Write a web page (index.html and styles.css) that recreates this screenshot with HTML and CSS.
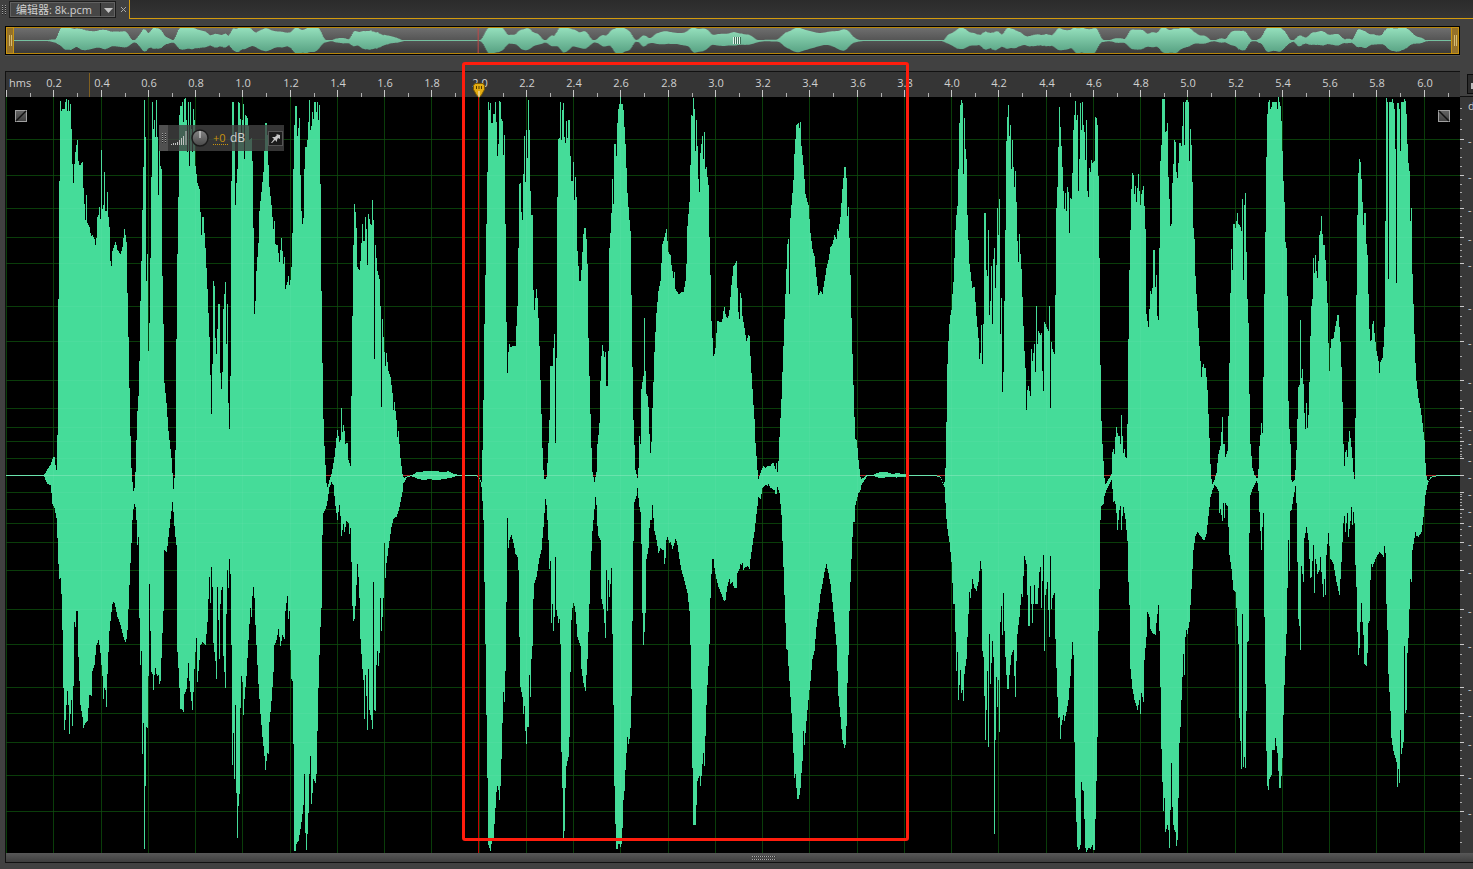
FILE: index.html
```html
<!DOCTYPE html>
<html lang="zh">
<head>
    <meta charset="UTF-8">
    <meta name="viewport" content="width=device-width, initial-scale=1.0">
    <title>编辑器: 8k.pcm</title>
    <link rel="stylesheet" href="styles.css">
</head>
<body>
    <!-- Panel tabs -->
    <div class="tab-bar">
        <div class="tab-area">
            <span class="grip"></span>
            <button class="tab">
                <span class="tab-title">编辑器: 8k.pcm</span>
                <svg class="tab-arrow" width="16" height="14"><path d="M1.500 0V13" stroke="#1c1c1c"/><path d="M5 5h9l-4.500 5z" fill="#c4c4c4"/></svg>
            </button>
            <button class="tab-close" aria-label="Close">
                <svg width="7" height="7"><path d="M1 1l5 5M6 1L1 6" stroke="#a9a9a9" fill="none"/></svg>
            </button>
        </div>
        <div class="tab-rest"></div>
    </div>

    <div class="editor">
        <!-- Zoom navigator -->
        <div class="overview">
            <svg id="overviewWave" viewBox="0 0 1454 25" preserveAspectRatio="none">
                <defs>
                    <linearGradient id="overviewFill" x1="0" y1="0" x2="0" y2="25" gradientUnits="userSpaceOnUse">
                        <stop offset="0" stop-color="#94dfbc"/>
                        <stop offset="1" stop-color="#58a283"/>
                    </linearGradient>
                </defs>
            </svg>
            <button class="zoom-handle zoom-left" aria-label="Zoom start"></button>
            <span class="overview-grip"></span>
            <button class="zoom-handle zoom-right" aria-label="Zoom end"></button>
        </div>

        <!-- Time ruler -->
        <svg class="ruler" id="ruler"></svg>
        <div class="scale-head">
            <button class="scale-btn" aria-label="Scale"></button>
        </div>

        <!-- Waveform -->
        <div class="plot">
            <svg class="layer" id="grid"></svg>
            <svg class="layer" id="wave" viewBox="0 0 1454 756" preserveAspectRatio="none"></svg>
            <svg class="layer" id="gridOver"></svg>

            <button class="fade fade-in" aria-label="Fade in">
                <svg width="12" height="12"><path d="M1 11L11 1" stroke="#111" stroke-width="1.500"/></svg>
            </button>
            <button class="fade fade-out" aria-label="Fade out">
                <svg width="12" height="12"><path d="M1 1L11 11" stroke="#111" stroke-width="1.500"/></svg>
            </button>

            <div class="hud">
                <span class="hud-grip"><span class="grip"></span></span>
                <svg class="hud-bars" width="16" height="14">
                    <path d="M.5 14v-1M2.500 14v-2M4.500 14v-2M6.500 14v-3M8.500 14v-5M10.500 14v-7M12.500 14v-9M15 14V0" stroke="#c2c2c2"/>
                </svg>
                <svg class="hud-knob" width="18" height="18">
                    <defs>
                        <linearGradient id="knobFill" x1="0" y1="0" x2="0" y2="1">
                            <stop offset="0" stop-color="#858585"/>
                            <stop offset="1" stop-color="#484848"/>
                        </linearGradient>
                    </defs>
                    <circle cx="9" cy="9" r="8" fill="url(#knobFill)" stroke="#1b1b1b" stroke-width="1.500"/>
                    <path d="M9 2v7" stroke="#eee"/>
                </svg>
                <input class="hud-value" type="text" id="gain" value="+0">
                <label class="hud-unit" for="gain">dB</label>
                <button class="hud-pin" aria-label="Pin">
                    <svg width="11" height="11"><path d="M6 1l4 1 0 4-2-1-1 2 0 2-2-2-3 3-1 0 3-4-2-2 3 0 2-2z" fill="#c6c6c6"/></svg>
                </button>
            </div>
        </div>
        <svg class="scale" id="scale"></svg>

        <!-- Scroll bar -->
        <div class="scroller"><span class="scroller-grip"></span></div>

        <!-- Play position -->
        <span class="playhead"></span>
        <svg class="playhead-cap" width="12" height="15">
            <path d="M2 .5h8l1.500 2v4L8.500 12 6 14.500 3.500 12 .5 6.500v-4z" fill="#e3ac13" stroke="#7c5b00"/>
            <path d="M3.500 3v3M6 3v3M8.500 3v3" stroke="#4d3900"/>
            <path d="M6 8v6" stroke="#eee"/>
        </svg>

        <div class="highlight"></div>
    </div>

    <script src="script.js"></script>
</body>
</html>
```
FILE: styles.css
```css
* {
    box-sizing: border-box;
}

body {
    margin: 0;
    height: 100vh;
    display: flex;
    flex-direction: column;
    overflow: hidden;
    background-color: #414141;
    color: #d0d0d0;
    font-family: "Open Sans", "Noto Sans CJK SC", sans-serif;
    font-size: 11px;
    line-height: 14px;
}

button {
    margin: 0;
    padding: 0;
    border: none;
    background: none;
    color: inherit;
    font: inherit;
}

svg {
    display: block;
}

/* Tabs */
.tab-bar {
    display: flex;
    height: 19px;
}

.tab-area {
    display: flex;
    align-items: center;
    width: 129px;
    padding-left: 2px;
}

.grip {
    width: 4px;
    height: 10px;
    background: repeating-linear-gradient(#a0a0a0 0 1px, #222 1px 2px);
    -webkit-mask: linear-gradient(90deg, #000 1px, transparent 1px 3px, #000 3px);
    mask: linear-gradient(90deg, #000 1px, transparent 1px 3px, #000 3px);
}

.tab {
    display: flex;
    align-items: center;
    justify-content: space-between;
    width: 107px;
    height: 17px;
    margin-left: 3px;
    padding-left: 6px;
    border: 1px solid #1c1c1c;
    box-shadow: inset 0 0 0 1px #626262;
    background-color: #464646;
}

.tab-title {
    white-space: nowrap;
}

.tab-close {
    margin-left: 4px;
}

.tab-rest {
    flex: 1;
    border-left: 1px solid #d39b0e;
    border-bottom: 1px solid #d39b0e;
    background: linear-gradient(#2b2b2b, #353535);
}

/* Editor */
.editor {
    position: relative;
    flex: 1;
    display: grid;
    grid-template-columns: 1fr 13px;
    grid-template-rows: 29px 26px 1fr 10px;
    margin-left: 5px;
    padding: 7px 0 6px;
}

.overview {
    position: relative;
    margin-bottom: 0;
    padding-left: 0;
    border: 1px solid #000;
    background: linear-gradient(#707070, #383838);
    box-shadow: inset 0 1px #b8860b, inset 0 -1px #b8860b, 0 1px #555;
}

.overview svg {
    width: 100%;
    height: 25px;
    margin-top: 1px;
}

.zoom-handle {
    position: absolute;
    top: 0;
    width: 8px;
    height: 27px;
    border: 1px solid #c8930f;
    background: linear-gradient(90deg, transparent 2px, #d7bd74 2px 3px, transparent 3px 4px, #d7bd74 4px 5px, transparent 5px) center 7px / 100% 11px no-repeat, #94712a;
}

.zoom-left {
    left: 0;
}

.zoom-right {
    right: 0;
}

.overview-grip {
    position: absolute;
    left: 50%;
    top: 10px;
    width: 8px;
    height: 7px;
    background: repeating-linear-gradient(90deg, #e4f4ec 0 1px, #3e7059 1px 2px);
}

.ruler {
    grid-row: 2;
    width: 100%;
    height: 26px;
    border-top: 1px solid #111;
    border-left: 1px solid #111;
    background-color: #353535;
}

.ruler text,
.scale text {
    fill: #d0d0d0;
}

.scale-head {
    grid-row: 2;
    grid-column: 2;
    padding: 3px 0 3px 7px;
    border-bottom: 1px solid #111;
}

.scale-btn {
    display: block;
    width: 6px;
    height: 20px;
    border: 1px solid #0c0c0c;
    border-right: none;
    background: linear-gradient(#bbb, #bbb) 3px 8px / 2px 6px no-repeat, #2c2c2c;
}

.plot {
    position: relative;
    grid-row: 3;
    border-left: 1px solid #111;
    background-color: #000;
}

.layer {
    position: absolute;
    inset: 0;
    width: 100%;
    height: 100%;
}

.scale {
    grid-row: 3;
    grid-column: 2;
    width: 13px;
    height: 100%;
    background-color: #383838;
}

.fade {
    position: absolute;
    top: 13px;
    width: 12px;
    height: 12px;
    background: linear-gradient(#666, #3c3c3c);
    box-shadow: inset 0 0 0 1px #a0a0a0;
}

.fade-in {
    left: 9px;
}

.fade-out {
    right: 10px;
}

/* Gain popup */
.hud {
    position: absolute;
    left: 153px;
    top: 28px;
    display: flex;
    align-items: center;
    width: 125px;
    height: 26px;
    background-color: rgba(66, 66, 66, 0.8);
}

.hud-grip {
    display: flex;
    align-items: center;
    width: 9px;
    height: 26px;
    padding-left: 3px;
    background-color: rgba(88, 88, 88, 0.8);
}

.hud-bars {
    margin-left: 3px;
}

.hud-knob {
    margin: 0 4px;
}

.hud-value {
    width: 15px;
    height: 13px;
    padding: 0;
    border: none;
    border-bottom: 1px dotted #c8930f;
    background: none;
    color: #c8930f;
    font: inherit;
}

.hud-unit {
    margin-left: 2px;
    font-size: 12px;
}

.hud-pin {
    display: grid;
    place-items: center;
    width: 13px;
    height: 13px;
    margin-left: auto;
    margin-right: 2px;
    background-color: #1b1b1b;
    box-shadow: 0 0 0 1px #555;
}

/* Scroll bar */
.scroller {
    grid-row: 4;
    grid-column: 1 / 3;
    display: flex;
    justify-content: center;
    padding-top: 3px;
    padding-left: 49px;
    border-bottom: 1px solid #111;
    border-left: 1px solid #111;
    background: linear-gradient(#585858, #3e3e3e);
}

.scroller-grip {
    width: 24px;
    height: 4px;
    background: repeating-linear-gradient(90deg, #aaa 0 1px, #333 1px 2px);
    -webkit-mask: linear-gradient(#000 1px, transparent 1px 3px, #000 3px);
    mask: linear-gradient(#000 1px, transparent 1px 3px, #000 3px);
}

/* Overlays */
.playhead {
    position: absolute;
    left: 473px;
    top: 78px;
    bottom: 16px;
    width: 1px;
    background-color: #c80000;
}

.playhead-cap {
    position: absolute;
    left: 468px;
    top: 64px;
}

.highlight {
    position: absolute;
    left: 457px;
    top: 43px;
    width: 447px;
    bottom: 28px;
    border: 3px solid #ff1d0d;
    border-radius: 3px;
    pointer-events: none;
}

/* space between the navigator and the ruler */
.editor {
    grid-template-rows: 29px 42px 1fr 10px;
}

.ruler,
.scale-head {
    align-self: end;
    height: 26px;
}
```
FILE: script.js
```js
const NS = 'http://www.w3.org/2000/svg';
const WIDTH = 1454;
const HEIGHT = 756;
const STEP = 47.25;   // width of 0.2 s

// Peaks as x,y pairs: 3 units per pixel across, 2.0128 per pixel down
const peaks = [
    {
        from: 0,
        top: '18,775 132,775 140,765 150,756 159,738 163,738 166,755 170,768 172,695 175,420 178,183 181,22 184,42 188,38 193,38 196,25 199,18 202,42 205,20 208,42 211,28 214,78 217,148 220,188 223,148 227,118 232,100 235,142 239,154 245,145 247,145 250,197 256,262 259,212 262,268 269,276 272,295 277,292 283,300 287,316 290,290 293,237 296,260 299,222 301,260 304,120 307,240 310,232 313,165 316,243 319,243 322,205 325,255 328,275 331,345 334,354 337,325 343,311 347,304 352,322 361,331 367,317 373,280 379,305 382,408 385,497 388,600 391,697 394,760 397,790 401,813 405,790 408,728 411,657 417,595 420,448 423,378 427,242 430,155 433,20 436,95 439,384 442,330 445,525 448,468 451,338 454,175 457,24 460,78 463,60 466,95 469,20 472,95 475,211 478,110 481,153 484,160 487,375 490,472 493,590 499,630 505,687 514,740 520,803 523,780 526,724 529,501 532,331 535,215 538,50 541,32 544,32 547,25 550,65 553,18 556,16 559,60 562,125 565,24 568,153 571,24 574,78 577,125 580,38 583,60 586,152 592,187 598,200 604,292 607,256 610,256 616,318 622,400 628,497 634,652 637,552 640,384 643,395 646,500 649,532 655,430 658,430 661,570 664,602 667,567 670,440 673,410 676,386 679,512 682,430 685,630 688,682 691,575 694,183 697,24 700,24 703,100 706,231 709,187 712,160 715,24 720,28 723,120 727,60',
        bottom: '18,776 132,777 141,793 152,795 157,833 163,842 170,865 175,955 179,995 182,975 186,1052 189,1157 192,1294 195,1278 198,1248 202,1209 205,1237 208,1296 211,1255 214,1228 217,1281 220,1200 223,1070 226,1080 229,1048 232,1048 235,1142 241,1237 247,1263 250,1284 256,1274 262,1270 268,1217 274,1220 277,1170 283,1157 289,1118 295,1107 300,1125 307,1180 311,1240 314,1185 319,1241 322,1175 328,1089 334,1050 338,1029 343,1032 352,1060 361,1077 370,1102 376,1112 381,1100 385,1045 390,965 394,912 398,850 404,830 408,850 412,915 415,900 418,1062 421,1157 424,1130 427,1337 430,1274 433,1527 436,1401 439,1283 442,1284 445,1180 448,995 451,1088 454,1172 457,1175 460,1208 463,1178 466,1163 470,1180 476,1176 479,1204 482,1183 485,1124 490,1048 493,925 500,930 505,900 511,863 517,830 520,850 525,895 530,922 532,1132 537,1183 540,1245 544,1245 550,1251 553,1215 560,1205 565,1153 568,1190 571,1212 577,1247 580,1212 584,1150 589,1104 592,1192 598,1148 601,1118 607,1112 616,1118 622,1070 628,980 631,1032 634,961 637,1000 640,1113 646,1150 649,1186 652,1000 655,1066 658,1145 661,1035 664,1007 667,1000 670,1140 676,1203 679,1055 682,967 685,1003 688,945 691,975 694,1118 697,1358 700,1294 703,1386 706,1237 709,1414 712,1505 716,1420 719,1415 722,1157 726,1200'
    },
    {
        from: 690,
        top: '40,28 43,138 46,50 52,56 55,72 58,100 65,97 68,165 70,278 73,450 76,425 79,365 85,308 88,243 94,205 100,165 103,122 106,66 109,66 112,90 117,190 124,232 130,280 133,263 136,310 142,312 148,346 154,297 160,350 163,337 166,400 172,387 175,374 178,392 183,376 186,318 188,257 191,110 195,32 199,32 202,92 205,76 208,56 211,172 214,243 217,269 220,257 223,160 226,115 231,113 234,78 238,20 241,80 244,72 247,45 250,58 253,25 256,24 259,45 262,25 265,60 268,30 271,190 274,405 277,550 280,662 284,735 287,765 290,803 296,790 303,775 308,760 314,735 319,700 322,684 328,708 331,704 334,641 337,688 341,669 346,712 352,711 355,745 361,757 364,615 367,455 370,312 373,230 376,245 379,278 382,357 388,362 391,345 397,269 400,303 403,303 406,255 409,280 412,353 415,250 421,270 424,271 427,222 430,262 433,541 436,312 442,365 448,380 451,435 454,638 457,460 460,498 466,556 469,530 475,565 481,577 487,610 490,644 493,628 499,665 502,698 505,686 511,740 517,773 521,782 530,778 538,776 552,773 562,768 572,769 590,766 605,767 620,766 635,770 655,767 670,772 685,775 719,775',
        bottom: '38,1185 40,1258 44,1215 49,1180 55,1108 61,1042 64,1060 67,1018 70,1000 73,1022 76,1077 80,1130 84,1185 91,1255 97,1302 103,1340 106,1368 112,1335 115,1337 118,1272 124,1230 130,1172 133,1118 139,1108 145,1084 151,1120 157,1097 163,1105 166,1048 172,1018 175,1065 178,1048 181,1127 184,1185 188,1190 190,1316 193,1531 198,1531 200,1505 203,1518 208,1500 214,1473 220,1440 223,1376 226,1495 229,1529 232,1497 235,1455 238,1376 241,1341 244,1438 247,1415 250,1386 256,1395 260,1370 262,1290 265,1203 268,1137 271,1080 274,1042 277,895 280,852 287,843 292,828 298,800 304,790 310,795 315,833 322,865 328,835 331,857 334,898 340,873 343,890 349,868 355,872 359,902 362,872 366,1028 370,1068 374,1065 379,997 382,955 385,980 388,1022 391,1105 397,1165 400,1188 403,1266 406,1178 409,1220 412,1289 415,1165 418,1247 424,1268 427,1286 430,991 433,1248 437,1250 440,1110 445,1160 448,1133 451,1022 454,1088 457,1060 460,1022 463,912 466,982 469,952 475,922 484,880 490,863 500,858 508,840 517,810 521,785 523,789 530,779 540,777 555,780 565,783 580,785 600,783 620,786 640,783 660,781 675,778 690,776 719,776'
    },
    {
        from: 1410,
        top: '0,775 21,776 27,780 35,790 37,724 40,624 43,470 46,373 49,270 52,165 55,25 58,40 61,26 64,66 67,66 70,48 73,48 76,24 79,65 82,132 85,108 88,22 91,24 94,58 97,62 100,130 103,90 106,270 109,467 112,570 115,527 118,512 121,518 127,515 136,515 142,435 145,318 148,190 151,188 154,245 157,262 160,170 163,92 166,185 169,80 172,137 175,20 178,80 181,203 184,252 187,252 190,403 193,443 196,418 199,400 202,418 205,458 208,515 214,652 217,720 220,765 223,783 227,783 230,778 235,710 238,665 241,556 247,556 250,520 253,492 256,710 259,540 262,215 265,98 268,97 271,25 274,100 277,40 280,26 283,95 286,106 289,62 292,97 295,60 298,60 301,133 304,184 307,184 310,145 313,222 316,175 319,216 322,325 328,385 331,385 334,362 337,327 340,290 343,278 346,278 349,300 352,350 355,500 361,652 364,720 367,768 373,790 380,765 383,687 386,697 389,658 392,550 397,513 403,537 406,528 409,595 413,595 415,525 418,318 421,288 424,247 427,180 430,230 433,108 436,108 439,133 442,66 445,38 448,28 451,15 454,28 459,28 463,75 466,108 472,207 478,262 481,283 484,412 487,558 490,664 496,765 502,780 505,760 508,696 511,712 514,601 520,575 523,459 526,565 529,612 534,617 537,680 541,730 544,708 547,640 550,588 553,527 559,448 565,405 571,385 577,310 583,296 589,280 595,327 601,333 604,352 610,378 613,367 616,400 625,411 634,407 640,407 646,385 649,350 652,273 658,225 661,150 664,50 667,52 670,16 673,38 676,122 679,60 682,112 685,180 688,205 691,127 697,92 700,138 703,85 706,160 709,155 712,176 715,192 718,295 721,373 724,464 730,535 735,530 738,497 742,464 749,467',
        bottom: '0,776 22,778 30,785 35,802 40,865 43,990 46,1115 49,1258 52,1385 55,1520 61,1532 66,1508 70,1512 73,1478 76,1445 80,1401 84,1401 88,1430 91,1400 94,1347 97,1275 100,1212 103,1232 106,1170 109,1030 112,862 115,922 118,905 124,895 130,912 136,933 143,940 146,980 148,1100 151,1202 157,1222 160,1256 163,1240 166,1290 169,1316 172,1283 175,1283 178,1178 181,1222 184,1145 187,1120 190,1025 193,992 199,980 208,942 214,925 220,880 226,823 230,840 235,905 238,965 241,948 244,1073 247,1035 250,1088 253,1060 256,940 259,1047 265,1072 268,1065 271,1115 274,1333 277,1405 280,1508 283,1491 286,1405 289,1360 295,1342 298,1302 301,1172 304,1066 308,1035 311,1030 316,1050 322,1100 331,1120 334,1165 340,1193 346,1210 352,1145 355,1090 358,1035 361,967 367,888 376,820 380,840 383,895 391,905 394,1025 400,1045 403,1073 406,1103 409,967 412,1048 415,987 418,1020 421,995 424,962 427,1095 430,1237 433,1400 436,1478 439,1528 442,1528 446,1515 451,1523 454,1518 457,1485 460,1430 463,1410 467,1355 472,1303 476,1320 481,1285 484,1220 487,1068 490,907 493,830 499,818 502,802 508,840 513,855 516,1030 520,1118 523,1090 526,1052 529,945 535,922 539,867 544,865 547,835 553,888 559,905 565,932 571,922 577,925 580,925 584,965 589,905 592,900 598,912 601,910 607,923 613,912 617,902 622,915 628,945 634,967 643,988 652,1012 658,1048 661,1118 664,1205 667,1365 670,1480 676,1480 679,1440 682,1390 688,1380 691,1400 694,1380 700,1335 703,1360 706,1300 709,1237 715,1160 718,1115 721,1022 724,975 727,943 731,945 733,962 738,982 744,998 749,1006'
    },
    {
        from: 2100,
        top: '62,468 66,466 70,445 73,437 77,455 84,460 88,443 94,392 100,355 106,349 109,344 112,398 115,447 118,460 121,408 124,418 127,455 133,480 139,505 145,493 148,495 151,535 154,570 160,635 163,662 166,710 172,765 175,782 181,770 190,756 196,761 205,756 211,757 219,748 226,762 229,750 232,768 235,747 238,698 244,622 250,515 253,460 256,410 262,310 265,300 268,410 271,257 277,207 280,182 283,128 289,70 295,66 298,76 301,64 304,112 310,150 316,210 325,232 331,287 337,320 343,335 349,376 355,412 361,404 367,410 373,385 379,358 385,342 391,317 397,310 403,292 409,300 412,280 415,283 421,255 427,200 433,154 436,154 439,178 442,254 445,235 448,298 451,373 454,458 457,532 460,594 463,658 466,702 470,704 475,745 481,779 484,783 491,780 500,775 520,774 535,770 562,769 575,773 590,771 610,773 630,775 715,776 722,780 730,794 735,785 737,735 740,635 742,552 745,505 747,475',
        bottom: '62,1012 67,1020 72,1030 76,1027 80,1005 85,990 88,984 91,995 97,990 102,1003 109,1003 112,973 118,965 121,955 124,957 127,952 130,966 136,960 143,958 148,964 151,943 157,915 163,890 169,853 175,820 181,823 187,802 196,795 202,797 205,793 211,801 217,803 223,806 228,817 232,800 238,812 244,855 250,960 256,1072 259,1125 262,1127 268,1190 274,1253 280,1335 283,1385 286,1376 289,1405 292,1427 296,1427 301,1405 304,1375 307,1350 310,1290 313,1318 319,1270 325,1227 331,1190 337,1145 343,1130 349,1080 355,1050 361,1015 367,995 373,970 379,955 385,972 391,995 397,1030 403,1070 409,1118 415,1220 421,1263 427,1308 433,1325 438,1315 441,1212 445,1137 448,1048 451,990 457,900 460,870 463,870 466,835 475,812 481,806 484,795 493,785 500,778 520,777 540,781 565,779 590,780 620,778 640,776 720,777 727,788 733,800 740,875 747,906'
    },
    {
        from: 2790,
        top: '58,470 62,448 65,440 68,397 71,380 74,318 77,263 83,228 86,125 89,38 94,20 97,26 100,170 103,56 106,118 109,138 112,252 118,350 124,384 127,398 133,397 139,455 145,500 149,555 152,518 154,474 157,552 160,470 163,248 166,248 169,362 172,374 175,282 178,453 181,425 184,355 187,470 190,340 193,318 196,398 199,353 202,237 205,292 208,220 211,492 214,418 217,608 220,568 223,424 226,282 229,102 232,55 235,31 238,92 241,70 244,160 247,100 250,155 253,195 256,163 259,225 262,303 265,347 268,290 271,330 274,360 280,475 283,525 286,560 289,644 292,603 295,596 301,616 304,522 307,545 313,512 316,567 319,435 322,512 325,485 331,494 334,490 337,565 340,606 343,466 349,478 355,485 358,435 361,641 364,508 367,521 373,532 376,412 379,237 382,195 385,115 388,35 391,75 394,112 397,155 400,204 403,240 406,208 409,244 412,195 415,205 418,287 421,218 424,220 427,167 430,80 433,50 436,22 439,60 442,50 445,203 448,138 451,26 454,80 457,24 460,70 463,85 466,140 469,60 472,203 475,215 478,156 481,165 484,140 487,147 493,143 496,54 499,56 502,70 505,173 508,338 511,553 514,667 517,712 520,747 523,780 526,794 532,787 540,778 545,772 547,728 550,722 553,733 556,698 559,679 562,690 565,697 568,697 571,712 574,655 577,697 580,731 583,722 586,739 589,740 592,672 595,501 598,362 601,282 604,200 607,168 610,172 613,210 616,193 619,225 625,170 628,203 631,232 634,210 640,194 643,233 646,280 649,450 655,478 658,440 661,404 664,410 667,398 670,323 673,323 676,397 679,373 682,455 685,463 688,318 691,142 694,110 697,18 703,18 706,85 709,82 712,66 715,176 718,220 721,274 724,270 727,187',
        bottom: '58,910 64,950 70,1035 73,1035 76,1090 79,1170 82,1132 85,1227 88,1197 91,1168 94,1213 97,1208 100,1229 103,1175 109,1145 112,1100 118,1010 121,1022 127,985 133,1002 139,1008 145,990 151,948 154,965 157,1130 160,1142 163,1220 166,1308 169,1247 172,1170 175,1322 178,1095 181,1195 187,1110 190,1142 193,1497 196,1308 199,1182 202,1242 205,1187 208,1293 211,1070 214,1038 217,1097 220,1013 223,1088 226,1142 229,1178 232,1205 235,1205 238,1178 244,1137 250,1127 253,1180 256,1222 259,1150 262,1095 268,1060 274,1015 277,1020 283,937 289,955 295,1078 298,1078 301,998 307,1073 313,997 316,1035 322,1035 328,970 331,960 334,1042 340,935 343,1130 346,1017 352,990 358,1102 361,937 364,1045 367,1022 373,1012 376,1105 382,1222 385,1265 388,1263 391,1306 394,1278 400,1258 403,1270 409,1252 415,1228 421,1180 427,1112 430,1137 433,1312 436,1425 442,1523 446,1532 451,1520 454,1393 457,1408 460,1411 466,1525 469,1533 475,1525 481,1528 487,1520 490,1530 494,1530 497,1436 499,1390 502,1303 505,1088 508,1005 511,865 514,837 520,833 523,817 529,805 535,797 541,790 545,782 548,815 551,835 554,822 559,852 562,885 568,845 571,838 574,885 577,857 580,840 586,863 592,907 595,990 598,1037 601,1165 607,1205 613,1228 622,1247 628,1227 631,1255 634,1213 640,1231 643,1147 649,1100 652,1050 658,1060 661,1085 667,1093 676,1097 679,1073 685,1036 688,1088 691,1202 694,1326 697,1393 700,1452 703,1425 706,1493 712,1480 715,1490 718,1525 721,1450 724,1355 727,1443'
    },
    {
        from: 3510,
        top: '8,187 12,112 15,80 18,156 21,184 24,165 27,112 30,98 33,125 36,88 40,24 43,110 46,24 49,20 52,20 55,24 58,142 61,78 64,110 67,186 70,278 73,300 76,375 82,445 88,515 94,577 97,558 100,552 103,560 107,560 112,603 115,652 118,700 121,752 124,782 127,794 133,785 139,770 145,733 151,717 157,658 160,712 163,712 166,738 172,727 175,657 178,550 181,408 184,320 187,362 190,270 193,270 196,278 199,264 202,247 205,270 211,275 214,284 217,220 220,383 223,232 226,208 229,326 232,420 235,468 238,612 241,712 247,760 253,775 259,780 264,783 267,725 271,695 274,670 277,690 280,578 283,410 286,285 289,135 292,48 295,25 298,20 301,38 304,34 307,24 313,24 319,24 322,38 325,15 328,24 331,32 334,62 337,122 340,184 343,225 346,305 349,318 352,415 355,625 358,682 361,712 364,785 368,790 373,785 376,765 379,725 382,662 385,598 388,594 391,462 394,580 397,562 400,592 403,650 406,682 409,631 412,680 415,655 418,587 421,495 424,435 427,420 430,338 433,368 436,333 439,365 442,378 445,345 448,292 451,283 454,254 457,290 460,312 463,312 466,343 469,385 472,428 475,510 478,565 481,520 484,502 490,500 496,475 502,453 505,453 508,478 511,508 514,558 517,628 520,713 523,757 526,728 529,725 532,738 535,708 538,686 541,700 544,718 547,740 550,768 554,787 556,660 559,413 562,252 565,167 568,138 571,145 574,180 577,225 580,272 583,247 586,247 589,310 592,333 595,410 598,482 601,505 604,503 607,470 610,465 613,490 619,525 625,545 628,570 631,547 637,540 640,517 643,478 646,263 649,16 652,24 655,380 658,24 664,24 667,18 670,26 673,38 676,118 679,388 682,26 685,26 688,38 691,122 694,24 700,24 703,18 708,25 711,95 715,147 718,163 721,263 724,237 727,370 730,430 733,492 736,550 739,585 745,620 751,640 757,670 763,705 766,750 770,785 775,786 780,780 790,776 897,775',
        bottom: '8,1445 11,1498 15,1480 18,1520 21,1525 24,1478 27,1322 30,1300 34,1228 40,1135 43,1178 46,1100 49,1087 52,1095 58,1070 64,1005 70,925 76,897 82,890 88,895 94,900 102,908 109,893 115,857 121,820 127,806 133,795 139,800 145,808 148,852 151,843 157,868 160,832 163,862 166,832 172,838 175,880 178,935 184,965 190,1007 196,1010 199,1042 205,1115 208,1265 211,1310 214,1366 217,1055 220,1362 223,1342 226,1365 229,1250 232,1112 235,1110 238,892 241,815 247,803 253,795 259,787 264,793 268,850 274,925 277,880 280,852 283,1060 286,1195 289,1330 292,1400 295,1408 298,1386 304,1378 307,1328 313,1328 316,1305 322,1335 328,1405 332,1405 337,1345 340,1257 343,1197 346,1140 349,1095 352,1003 355,905 358,968 361,847 364,845 370,820 376,797 380,842 384,1060 388,1078 391,1127 394,958 400,990 403,902 409,880 415,905 421,983 424,980 430,915 433,1012 436,945 439,955 442,975 448,967 451,940 454,970 460,1020 463,985 466,1017 469,935 475,892 481,943 490,955 499,990 508,1017 514,950 517,910 520,872 523,857 526,890 532,852 535,900 541,868 544,840 547,875 550,850 554,880 556,957 559,1000 562,1090 565,1138 568,1123 571,1070 574,1032 577,1070 580,1097 583,1155 589,1160 592,1133 595,1072 598,1068 601,987 604,955 607,960 613,950 619,940 628,930 637,935 640,940 643,918 646,932 649,1035 652,1087 655,1175 661,1250 664,1305 670,1330 679,1353 682,1402 685,1367 688,1395 691,1289 694,1337 700,1313 703,1120 706,1253 709,1248 712,1133 715,1103 718,1045 721,985 724,990 727,925 736,890 739,897 745,900 754,890 760,860 766,815 771,797 776,787 790,777 897,776'
    }
];

function add(parent, name, attrs, text) {
    const el = document.createElementNS(NS, name);
    for (const key in attrs) {
        el.setAttribute(key, attrs[key]);
    }
    if (text) {
        el.textContent = text;
    }
    parent.appendChild(el);
}

// One value per pixel column, straight lines between the stored peaks
function expand(side) {
    const points = [];
    peaks.forEach(part => {
        part[side].split(' ').forEach(pair => {
            const [x, y] = pair.split(',').map(Number);
            points.push([part.from + x, y]);
        });
    });
    const out = [];
    let i = 0;
    for (let px = 0; px < WIDTH; px++) {
        const x = (px + 6) * 3 + 1;
        while (i < points.length - 2 && points[i + 1][0] < x) {
            i++;
        }
        const [x0, y0] = points[i];
        const [x1, y1] = points[i + 1];
        const t = Math.min(1, Math.max(0, (x - x0) / (x1 - x0)));
        out.push((y0 + (y1 - y0) * t) / 2.0128 - 7);
    }
    return out;
}

function stepPath(top, bottom) {
    let d = '';
    for (let x = 0; x < WIDTH; x++) {
        d += `M${x} ${top[x]}h1V${bottom[x]}h-1z`;
    }
    return d;
}

const top0 = expand('top').map(Math.round);
const bottom0 = expand('bottom').map((y, i) => Math.max(Math.round(y), top0[i] + 1));

// Main waveform
const wave = document.getElementById('wave');
add(wave, 'rect', { x: 0, y: 378, width: WIDTH, height: 1, fill: '#9c0000' });
add(wave, 'path', { d: stepPath(top0, bottom0), fill: '#45dc99', 'shape-rendering': 'crispEdges' });

// Navigator waveform, smoothed and lifted
function small(list, side) {
    return list.map((_, i) => {
        let sum = 0;
        for (let k = -2; k <= 2; k++) {
            sum += list[Math.min(WIDTH - 1, Math.max(0, i + k))];
        }
        const level = Math.max(0, (sum / 5 - 378) * side) / 378;
        return 12.5 + side * Math.max(0.5, Math.min(12.5, Math.pow(level, 0.8) * 13.5));
    });
}
const overview = document.getElementById('overviewWave');
add(overview, 'path', { d: stepPath(small(top0, -1), small(bottom0, 1)), fill: 'url(#overviewFill)' });
add(overview, 'rect', { x: 472, y: 0, width: 1, height: 25, fill: '#c04848' });

// Level lines, from the top of the plot
const levels = [42, 78, 111, 140, 166, 209, 244, 283, 311, 330, 344, 361, 395, 412, 426, 445, 473, 512, 547, 590, 616, 645, 678, 714];
const px = x => (x / WIDTH * 100) + '%';
const py = y => (y / HEIGHT * 100) + '%';

function drawGrid(id, color) {
    const svg = document.getElementById(id);
    svg.setAttribute('shape-rendering', 'crispEdges');
    for (let k = 0; k <= 30; k++) {
        add(svg, 'rect', { x: px(Math.round(k * STEP)), y: 0, width: 1, height: '100%', fill: color });
    }
    levels.forEach(y => {
        add(svg, 'rect', { x: 0, y: py(y), width: '100%', height: 1, fill: color });
    });
}
drawGrid('grid', '#003600');
drawGrid('gridOver', 'rgba(255, 255, 255, 0.04)');
add(document.getElementById('gridOver'), 'rect', { x: 0, y: py(378), width: '100%', height: 1, fill: 'rgba(255, 255, 255, 0.2)' });

// Time ruler
const ruler = document.getElementById('ruler');
add(ruler, 'text', { x: 3, y: 15 }, 'hms');
for (let k = 0; k <= 30; k++) {
    const x = Math.round(k * STEP);
    add(ruler, 'rect', { x: px(x), y: 18, width: 1, height: 7, fill: '#c8c8c8' });
    add(ruler, 'rect', { x: px(x + 24), y: 21, width: 1, height: 4, fill: '#b0b0b0' });
    if (k > 0) {
        add(ruler, 'text', { x: px(x + 1), y: 15, 'text-anchor': 'middle' }, (k / 5).toFixed(1));
    }
}
add(ruler, 'rect', { x: px(83), y: 1, width: 1, height: 24, fill: '#806020' });

// Level scale
const scale = document.getElementById('scale');
scale.setAttribute('shape-rendering', 'crispEdges');
add(scale, 'text', { x: 8, y: 13 }, 'd');
[...levels, 378].forEach(y => {
    add(scale, 'rect', { x: 0, y: py(y), width: 4, height: 1, fill: '#c8c8c8' });
    add(scale, 'text', { x: 8, y: py(y + 6) }, '-');
});
const minor = [11, 22, 32, 51, 60, 69, 87, 95, 103, 119, 126, 133, 147, 153, 159, 179, 190, 199, 219, 228, 236, 259, 272, 293, 303, 318, 324, 336, 340, 348, 351, 354, 357, 359];
minor.forEach(y => {
    add(scale, 'rect', { x: 0, y: py(y), width: 2, height: 1, fill: '#a8a8a8' });
    add(scale, 'rect', { x: 0, y: py(HEIGHT - y), width: 2, height: 1, fill: '#a8a8a8' });
});
```
